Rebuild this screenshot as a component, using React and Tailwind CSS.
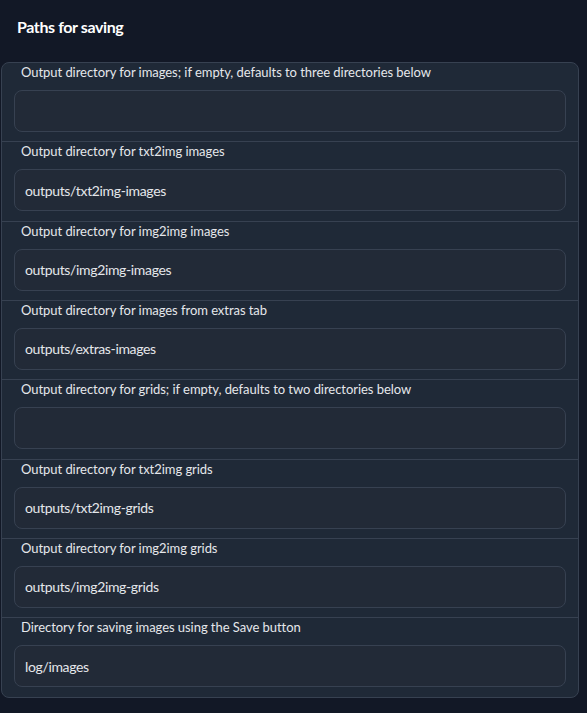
import React from "react";

const rows = [
  ["Output directory for images; if empty, defaults to three directories below", ""],
  ["Output directory for txt2img images", "outputs/txt2img-images"],
  ["Output directory for img2img images", "outputs/img2img-images"],
  ["Output directory for images from extras tab", "outputs/extras-images"],
  ["Output directory for grids; if empty, defaults to two directories below", ""],
  ["Output directory for txt2img grids", "outputs/txt2img-grids"],
  ["Output directory for img2img grids", "outputs/img2img-grids"],
  ["Directory for saving images using the Save button", "log/images"],
];

export default function App() {
  return (
    <div
      className="w-[587px] h-[713px] bg-[#121826] overflow-hidden"
      style={{ fontFamily: '"Lato", "Noto Sans", sans-serif' }}
    >
      <div className="pt-[15px] pl-[17px] h-[62px] text-[16px] font-bold text-white tracking-[-0.4px]">
        Paths for saving
      </div>
      <div className="ml-[1px] w-[578px] bg-[#1f2937] border border-[#374151] rounded-lg">
        {rows.map(([label, value], i) => (
          <div
            key={i}
            className={`px-[12px] pb-[9.33px] ${i < rows.length - 1 ? "border-b border-[#374151]" : ""}`}
          >
            <div className="pl-[7px] h-[18px] leading-[18px] text-[13px] text-[#e5e7eb] mb-[9px] tracking-[-0.05px]">
              {label}
            </div>
            <div className="h-[42px] rounded-lg border border-[#374151] bg-[#222a37] pl-[10px] flex items-center text-[14px] text-[#e5e7eb] tracking-[-0.35px]">
              {value}
            </div>
          </div>
        ))}
      </div>
    </div>
  );
}
